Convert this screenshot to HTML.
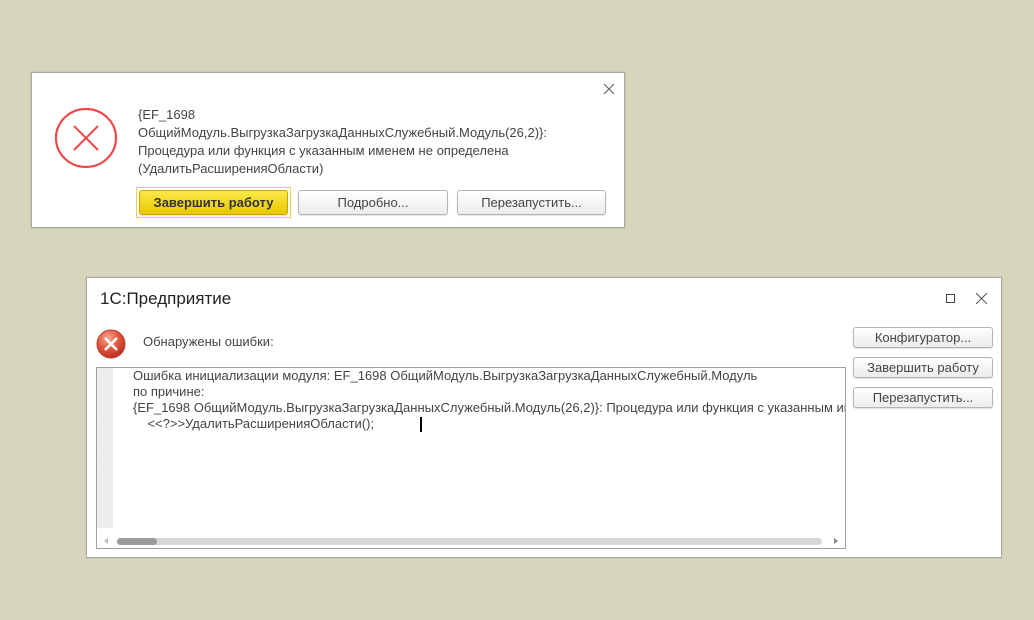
<!DOCTYPE html>
<html><head><meta charset="utf-8"><style>
*{margin:0;padding:0;box-sizing:border-box}
body{width:1034px;height:620px;background:#d6d6bd;position:relative;overflow:hidden;font-family:"Liberation Sans","DejaVu Sans",sans-serif;color:#333}
.abs{position:absolute}
.win{background:#fff;border:1px solid #a8a8a0;box-shadow:0 0 2px rgba(0,0,0,.15)}
.btn{position:absolute;border:1px solid #b4b4b4;border-radius:3px;background:linear-gradient(#fff,#ececec);font-size:13px;text-align:center;color:#444;box-shadow:0 1px 1px rgba(0,0,0,.12)}
.t{font-size:13px;line-height:18px;color:#444;white-space:nowrap}
</style></head><body>
<div class="abs win" style="left:31px;top:72px;width:594px;height:156px">
  <svg class="abs" style="left:22px;top:34px" width="66" height="64"><ellipse cx="32" cy="31" rx="30" ry="29" fill="none" stroke="#f04848" stroke-width="2.2"/><path d="M20 19L44 43M44 19L20 43" stroke="#f04848" stroke-width="2"/></svg>
  <svg class="abs" style="left:571px;top:10px" width="12" height="12"><path d="M1 1L11 11M11 1L1 11" stroke="#666" stroke-width="1.2"/></svg>
  <div class="abs t" style="left:106px;top:33px;line-height:18px">{EF_1698<br>ОбщийМодуль.ВыгрузкаЗагрузкаДанныхСлужебный.Модуль(26,2)}:<br>Процедура или функция с указанным именем не определена<br>(УдалитьРасширенияОбласти)</div>
  <div class="abs" style="left:104px;top:114px;width:155px;height:31px;border:1px solid #f0d040"></div>
  <div class="btn" style="left:107px;top:117px;width:149px;height:25px;background:linear-gradient(#fbe84a,#e8c800);border-color:#c8a800;font-weight:bold;color:#333;line-height:23px;font-size:13px">Завершить работу</div>
  <div class="btn" style="left:266px;top:117px;width:150px;height:25px;line-height:23px">Подробно...</div>
  <div class="btn" style="left:425px;top:117px;width:149px;height:25px;line-height:23px">Перезапустить...</div>
</div>
<div class="abs win" style="left:86px;top:277px;width:916px;height:281px">
  <div class="abs" style="left:13px;top:11px;font-size:17px;color:#222">1С:Предприятие</div>
  <svg class="abs" style="left:859px;top:16px" width="10" height="10"><rect x="0.5" y="0.5" width="8" height="8" fill="none" stroke="#444"/></svg>
  <svg class="abs" style="left:889px;top:15px" width="11" height="11"><path d="M0 0L11 11M11 0L0 11" stroke="#555" stroke-width="1"/></svg>
  <svg class="abs" style="left:9px;top:51px" width="30" height="30"><defs><radialGradient id="g" cx="40%" cy="30%" r="70%"><stop offset="0" stop-color="#f8a890"/><stop offset=".6" stop-color="#e0503a"/><stop offset="1" stop-color="#b83020"/></radialGradient></defs><circle cx="15" cy="15" r="14" fill="url(#g)" stroke="#b84030"/><path d="M9 9L21 21M21 9L9 21" stroke="#fff" stroke-width="2.5"/></svg>
  <div class="abs t" style="left:56px;top:55px">Обнаружены ошибки:</div>
  <div class="abs" style="left:9px;top:89px;width:750px;height:182px;border:1px solid #a0a0a0;overflow:hidden;background:#fff">
    <div class="abs" style="left:0;top:0;width:16px;height:160px;background:#eee;background-image:repeating-linear-gradient(45deg,#e4e4e4 0 1px,#f6f6f6 1px 2px)"></div>
    <div class="abs t" style="left:36px;top:0;line-height:16px;font-size:13px">Ошибка инициализации модуля: EF_1698 ОбщийМодуль.ВыгрузкаЗагрузкаДанныхСлужебный.Модуль<br>по причине:<br>{EF_1698 ОбщийМодуль.ВыгрузкаЗагрузкаДанныхСлужебный.Модуль(26,2)}: Процедура или функция с указанным именем<br>&nbsp;&nbsp;&nbsp;&nbsp;&lt;&lt;?&gt;&gt;УдалитьРасширенияОбласти();</div>
    <div class="abs" style="left:323px;top:49px;width:2px;height:15px;background:#000"></div>
    <div class="abs" style="left:0;top:166px;width:748px;height:14px;background:#fff"></div>
    <div class="abs" style="left:20px;top:170px;width:705px;height:7px;border-radius:4px;background:#d8d8d8"></div>
    <div class="abs" style="left:20px;top:170px;width:40px;height:7px;border-radius:4px;background:#9a9a9a"></div>
    <div class="abs" style="left:7px;top:170px;width:0;height:0;border:3px solid transparent;border-right:4px solid #bbb;border-left:0"></div>
    <div class="abs" style="left:737px;top:170px;width:0;height:0;border:3px solid transparent;border-left:4px solid #888;border-right:0"></div>
  </div>
  <div class="btn" style="left:766px;top:49px;width:140px;height:21px;line-height:19px">Конфигуратор...</div>
  <div class="btn" style="left:766px;top:79px;width:140px;height:21px;line-height:19px">Завершить работу</div>
  <div class="btn" style="left:766px;top:109px;width:140px;height:21px;line-height:19px">Перезапустить...</div>
</div>
</body></html>
